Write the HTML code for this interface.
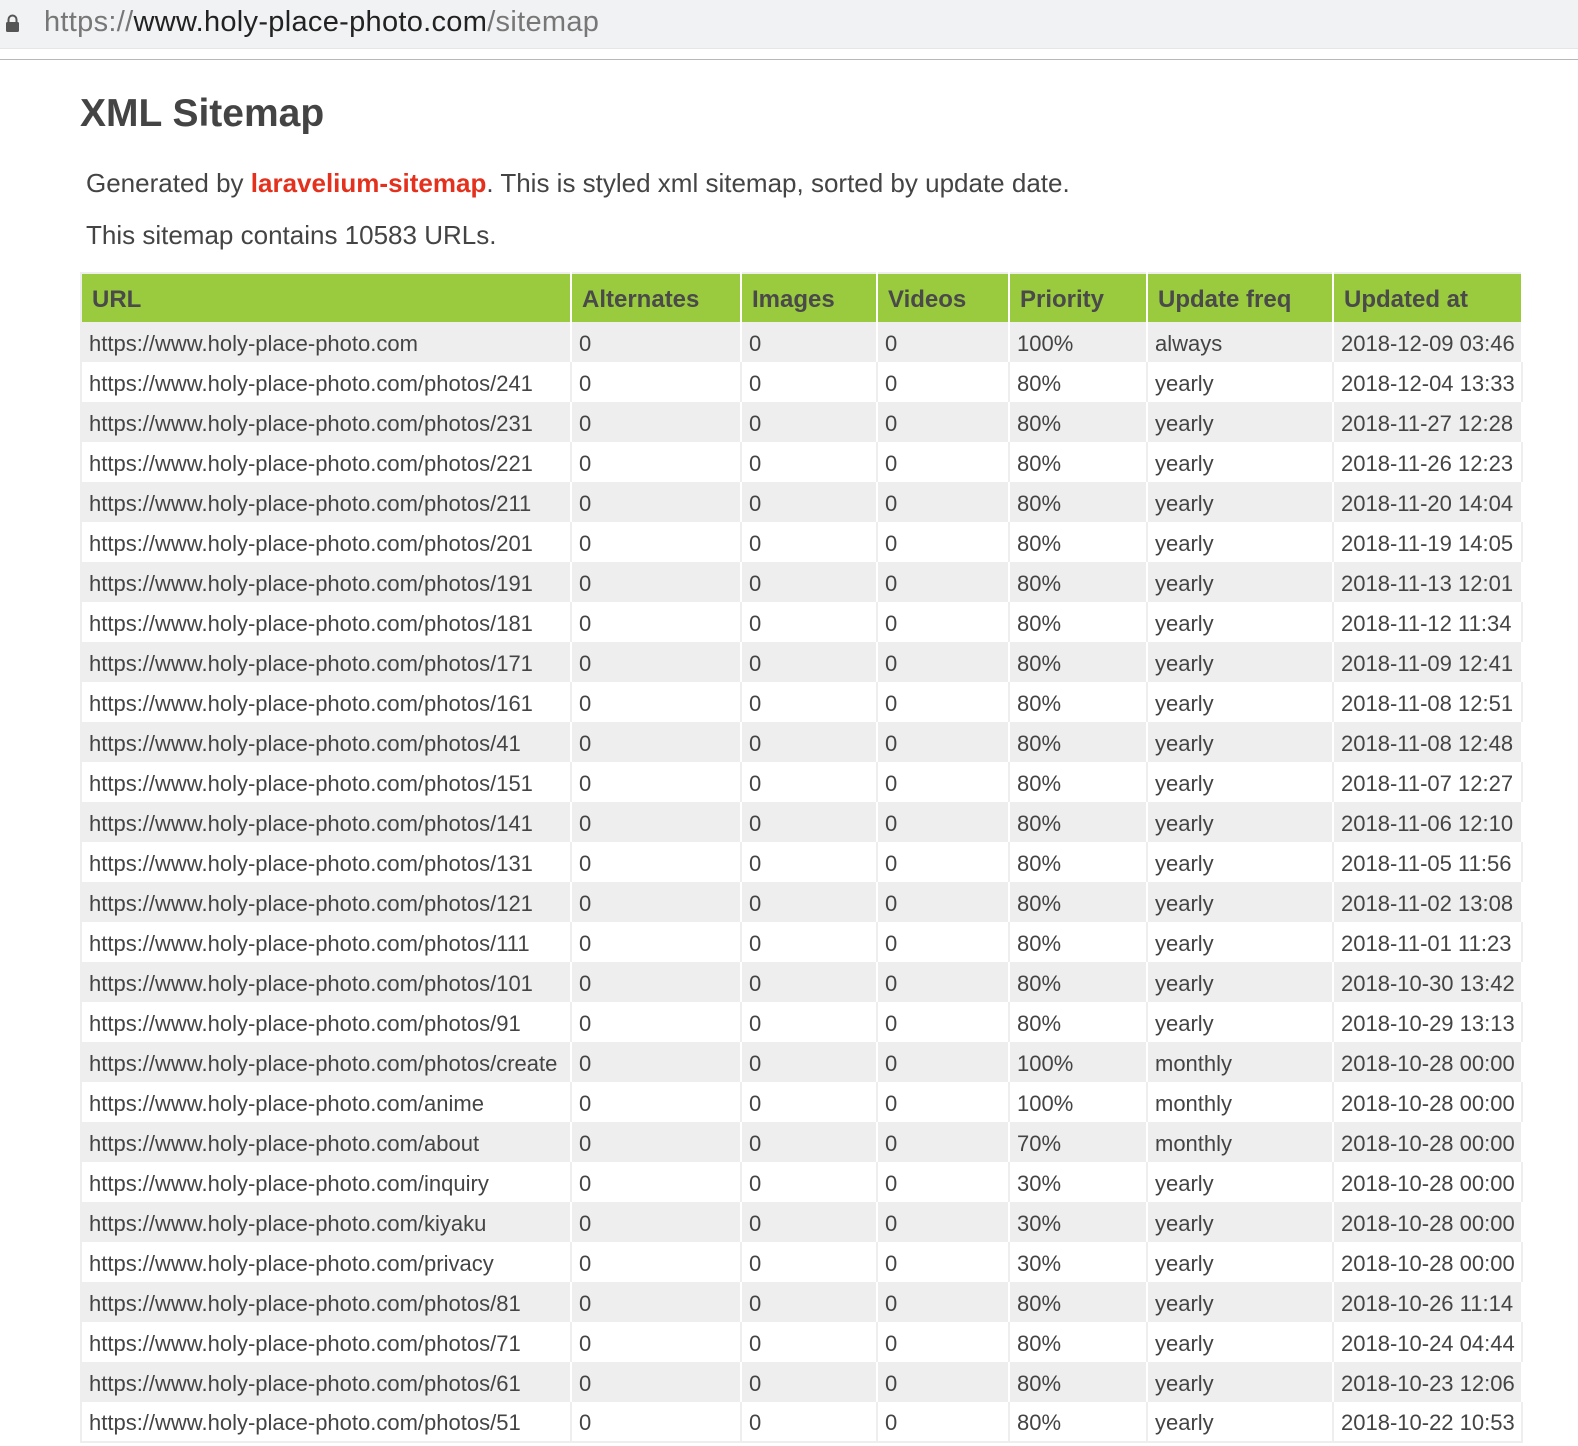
<!DOCTYPE html>
<html><head><meta charset="utf-8"><style>
body{margin:0;background:#fff;font-family:"Liberation Sans",Arial,sans-serif;width:1578px;height:1446px;overflow:hidden;}
.bar{height:48px;background:#f1f2f4;position:relative;border-bottom:1px solid #e6e6e6}
.line{position:absolute;top:59px;left:0;width:1578px;height:1px;background:#b8b8b8}
.url{position:absolute;left:44px;top:6px;font-size:29px;letter-spacing:0.3px;color:#777;}
.url b{font-weight:normal;color:#222}
.lock{position:absolute;left:5px;top:14px;width:15px;height:18px}
h1{position:absolute;left:80px;top:92px;margin:0;font-size:39px;color:#444;font-weight:bold}
.p{position:absolute;left:86px;font-size:26px;color:#444}
.p a{color:#e3311d;font-weight:bold;text-decoration:none}
table{position:absolute;left:80px;top:272px;width:1441px;table-layout:fixed;border-collapse:collapse;border:2px solid #eee;font-size:22px;color:#444}
td,th{padding:0 0 0 7px;text-align:left;white-space:nowrap;overflow:hidden;border-right:2px solid #fff}
tr{height:40px}
tr:first-child{height:49px}
td{padding-top:3px}
th{background:#9acb3e;color:#4a4a4a;font-size:24px;border-right:2px solid #fff;padding-left:10px;padding-top:3px}
tr:nth-child(even) td{background:#eee;border-right-color:#fff}
tr:nth-child(odd) td{background:#fff;border-right-color:#eee}
</style></head><body>
<div class="bar">
<svg class="lock" viewBox="0 0 15 18"><path d="M3.5 8V5.5a4 4 0 0 1 8 0V8" fill="none" stroke="#555" stroke-width="2"/><rect x="1" y="8" width="13" height="10" rx="1.5" fill="#555"/></svg>
<div class="url">https://<b>www.holy-place-photo.com</b>/sitemap</div></div>
<div class="line"></div>
<h1>XML Sitemap</h1>
<div class="p" style="top:168px">Generated by <a>laravelium-sitemap</a>. This is styled xml sitemap, sorted by update date.</div>
<div class="p" style="top:220px">This sitemap contains 10583 URLs.</div>
<table>
<colgroup><col style="width:490px"><col style="width:170px"><col style="width:136px"><col style="width:132px"><col style="width:138px"><col style="width:186px"><col style="width:189px"></colgroup>
<tr><th>URL</th><th>Alternates</th><th>Images</th><th>Videos</th><th>Priority</th><th>Update freq</th><th>Updated at</th></tr>
<tr><td>https://www.holy-place-photo.com</td><td>0</td><td>0</td><td>0</td><td>100%</td><td>always</td><td>2018-12-09 03:46</td></tr>
<tr><td>https://www.holy-place-photo.com/photos/241</td><td>0</td><td>0</td><td>0</td><td>80%</td><td>yearly</td><td>2018-12-04 13:33</td></tr>
<tr><td>https://www.holy-place-photo.com/photos/231</td><td>0</td><td>0</td><td>0</td><td>80%</td><td>yearly</td><td>2018-11-27 12:28</td></tr>
<tr><td>https://www.holy-place-photo.com/photos/221</td><td>0</td><td>0</td><td>0</td><td>80%</td><td>yearly</td><td>2018-11-26 12:23</td></tr>
<tr><td>https://www.holy-place-photo.com/photos/211</td><td>0</td><td>0</td><td>0</td><td>80%</td><td>yearly</td><td>2018-11-20 14:04</td></tr>
<tr><td>https://www.holy-place-photo.com/photos/201</td><td>0</td><td>0</td><td>0</td><td>80%</td><td>yearly</td><td>2018-11-19 14:05</td></tr>
<tr><td>https://www.holy-place-photo.com/photos/191</td><td>0</td><td>0</td><td>0</td><td>80%</td><td>yearly</td><td>2018-11-13 12:01</td></tr>
<tr><td>https://www.holy-place-photo.com/photos/181</td><td>0</td><td>0</td><td>0</td><td>80%</td><td>yearly</td><td>2018-11-12 11:34</td></tr>
<tr><td>https://www.holy-place-photo.com/photos/171</td><td>0</td><td>0</td><td>0</td><td>80%</td><td>yearly</td><td>2018-11-09 12:41</td></tr>
<tr><td>https://www.holy-place-photo.com/photos/161</td><td>0</td><td>0</td><td>0</td><td>80%</td><td>yearly</td><td>2018-11-08 12:51</td></tr>
<tr><td>https://www.holy-place-photo.com/photos/41</td><td>0</td><td>0</td><td>0</td><td>80%</td><td>yearly</td><td>2018-11-08 12:48</td></tr>
<tr><td>https://www.holy-place-photo.com/photos/151</td><td>0</td><td>0</td><td>0</td><td>80%</td><td>yearly</td><td>2018-11-07 12:27</td></tr>
<tr><td>https://www.holy-place-photo.com/photos/141</td><td>0</td><td>0</td><td>0</td><td>80%</td><td>yearly</td><td>2018-11-06 12:10</td></tr>
<tr><td>https://www.holy-place-photo.com/photos/131</td><td>0</td><td>0</td><td>0</td><td>80%</td><td>yearly</td><td>2018-11-05 11:56</td></tr>
<tr><td>https://www.holy-place-photo.com/photos/121</td><td>0</td><td>0</td><td>0</td><td>80%</td><td>yearly</td><td>2018-11-02 13:08</td></tr>
<tr><td>https://www.holy-place-photo.com/photos/111</td><td>0</td><td>0</td><td>0</td><td>80%</td><td>yearly</td><td>2018-11-01 11:23</td></tr>
<tr><td>https://www.holy-place-photo.com/photos/101</td><td>0</td><td>0</td><td>0</td><td>80%</td><td>yearly</td><td>2018-10-30 13:42</td></tr>
<tr><td>https://www.holy-place-photo.com/photos/91</td><td>0</td><td>0</td><td>0</td><td>80%</td><td>yearly</td><td>2018-10-29 13:13</td></tr>
<tr><td>https://www.holy-place-photo.com/photos/create</td><td>0</td><td>0</td><td>0</td><td>100%</td><td>monthly</td><td>2018-10-28 00:00</td></tr>
<tr><td>https://www.holy-place-photo.com/anime</td><td>0</td><td>0</td><td>0</td><td>100%</td><td>monthly</td><td>2018-10-28 00:00</td></tr>
<tr><td>https://www.holy-place-photo.com/about</td><td>0</td><td>0</td><td>0</td><td>70%</td><td>monthly</td><td>2018-10-28 00:00</td></tr>
<tr><td>https://www.holy-place-photo.com/inquiry</td><td>0</td><td>0</td><td>0</td><td>30%</td><td>yearly</td><td>2018-10-28 00:00</td></tr>
<tr><td>https://www.holy-place-photo.com/kiyaku</td><td>0</td><td>0</td><td>0</td><td>30%</td><td>yearly</td><td>2018-10-28 00:00</td></tr>
<tr><td>https://www.holy-place-photo.com/privacy</td><td>0</td><td>0</td><td>0</td><td>30%</td><td>yearly</td><td>2018-10-28 00:00</td></tr>
<tr><td>https://www.holy-place-photo.com/photos/81</td><td>0</td><td>0</td><td>0</td><td>80%</td><td>yearly</td><td>2018-10-26 11:14</td></tr>
<tr><td>https://www.holy-place-photo.com/photos/71</td><td>0</td><td>0</td><td>0</td><td>80%</td><td>yearly</td><td>2018-10-24 04:44</td></tr>
<tr><td>https://www.holy-place-photo.com/photos/61</td><td>0</td><td>0</td><td>0</td><td>80%</td><td>yearly</td><td>2018-10-23 12:06</td></tr>
<tr><td>https://www.holy-place-photo.com/photos/51</td><td>0</td><td>0</td><td>0</td><td>80%</td><td>yearly</td><td>2018-10-22 10:53</td></tr>
</table>
</body></html>
